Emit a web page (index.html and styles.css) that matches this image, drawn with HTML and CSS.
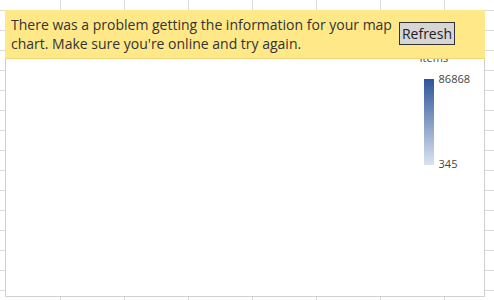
FILE: index.html
```html
<!DOCTYPE html>
<html lang="en">
<head>
  <meta charset="UTF-8">
  <title>Map chart</title>
  <link rel="stylesheet" href="styles.css">
</head>
<body>

  <div class="chart">
    <div class="notice">
      <p class="notice-text">There was a problem getting the information for your map chart. Make sure you're online and try again.</p>
      <button class="refresh-btn">Refresh</button>
    </div>

    <div class="plot">
      <div class="legend">
        <div class="legend-title">Items</div>
        <div class="legend-body">
          <div class="legend-bar"></div>
          <div class="legend-labels">
            <span>86868</span>
            <span>345</span>
          </div>
        </div>
      </div>
    </div>
  </div>

</body>
</html>
```

FILE: styles.css
```css
html, body {
  height: 100%;
}

body {
  margin: 0;
  padding: 10px 0 0 5px;
  box-sizing: border-box;
  font-family: "Open Sans", "Noto Sans", sans-serif;
  background-color: #fff;
  /* spreadsheet gridlines behind the chart */
  background-image:
    linear-gradient(to right, #dadada 1px, transparent 1px),
    linear-gradient(to bottom, #dadada 1px, transparent 1px);
  background-size: 64px 20px;
  background-position: 60px 10px;
  overflow: hidden;
}

.chart {
  width: 480px;
  height: 287px;
  box-sizing: border-box;
  background: #fff;
  border: 1px solid #d0d0d0;
  border-top: none;
  display: flex;
  flex-direction: column;
}

.notice {
  position: relative;
  z-index: 1;
  height: 49px;
  margin: 0 -1px;
  box-sizing: border-box;
  background: #ffe888;
  border-bottom: 1px solid #eed67a;
  display: flex;
  align-items: center;
  justify-content: space-between;
  padding: 0 30px 0 6px;
}

.notice-text {
  margin: 0;
  width: 388px;
  font-size: 14px;
  line-height: 19px;
  color: #333;
}

.refresh-btn {
  font-family: inherit;
  font-size: 14px;
  color: #222;
  background: #d6d6d6;
  border: 1px solid #333;
  border-radius: 0;
  padding: 0 2px;
  height: 23px;
  margin-top: -2px;
}

.plot {
  flex: 1;
  display: flex;
  justify-content: flex-end;
  padding-right: 14px;
}

.legend {
  margin-top: -8px;
  display: flex;
  flex-direction: column;
  align-items: flex-start;
  color: #444;
  font-size: 11px;
}

.legend-title {
  line-height: 14px;
  margin-left: -4px;
}

.legend-body {
  display: flex;
  gap: 5px;
  margin-top: 14px;
}

.legend-bar {
  width: 10px;
  height: 86px;
  background: linear-gradient(to bottom, #2f5597, #dae3f3);
}

.legend-labels {
  display: flex;
  flex-direction: column;
  justify-content: space-between;
  line-height: 14px;
  margin-top: -7px;
  margin-bottom: -6px;
}
```
